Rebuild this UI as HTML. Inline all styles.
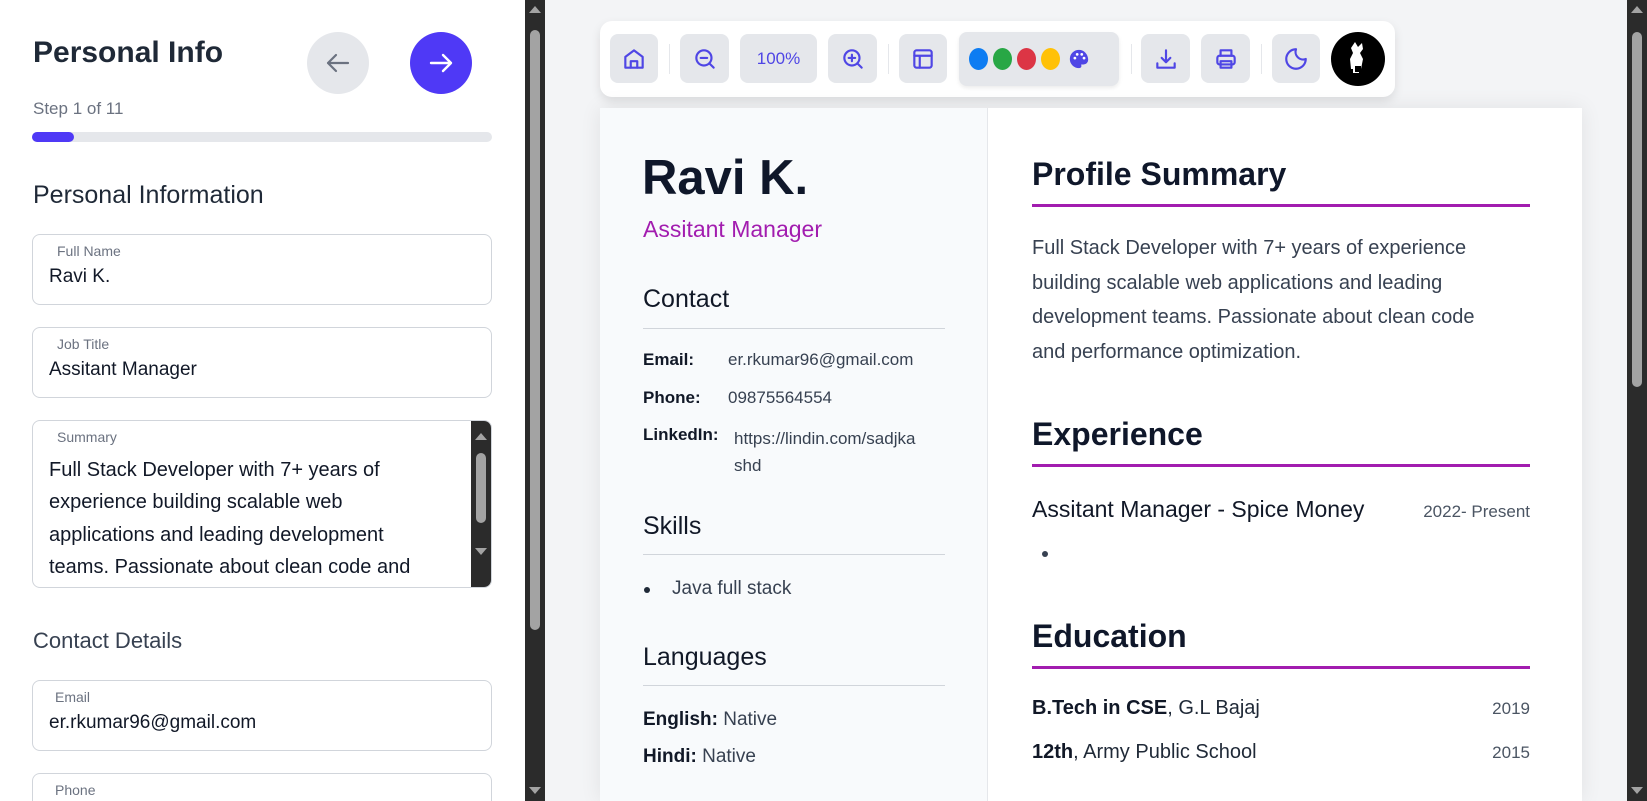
<!DOCTYPE html>
<html style="overflow:hidden;height:801px"><head><meta charset="utf-8"><style>
*{box-sizing:border-box;margin:0;padding:0}
body{width:1647px;height:801px;overflow:hidden;font-family:"Liberation Sans",sans-serif;background:#f3f4f6;position:relative;color:#111827}
.a{position:absolute}
.left{left:0;top:0;width:525px;height:801px;background:#fff;overflow:hidden}
.sb{background:#2b2b2b;width:20px;height:801px;top:0}
.thumb{position:absolute;left:5px;width:10px;background:#a3a3a3;border-radius:5px}
.tri-up{position:absolute;left:4px;width:0;height:0;border-left:6px solid transparent;border-right:6px solid transparent;border-bottom:7px solid #a3a3a3}
.tri-dn{position:absolute;left:4px;width:0;height:0;border-left:6px solid transparent;border-right:6px solid transparent;border-top:7px solid #a3a3a3}
.box{position:absolute;left:32px;width:460px;border:1px solid #d1d5db;border-radius:8px;background:#fff}
.lbl{position:absolute;left:24px;top:8px;font-size:14px;color:#6b7280}
.val{position:absolute;left:16px;top:31px;font-size:19px;color:#111827}
.tb{position:absolute;top:34px;height:49px;background:#e5e7eb;border-radius:8px;display:flex;align-items:center;justify-content:center}
.sep{position:absolute;top:44px;width:1px;height:30px;background:#e5e7eb}
.tb svg{width:26px;height:26px;fill:none;stroke:#4f46e5;stroke-width:2;stroke-linecap:round;stroke-linejoin:round}
.h2{font-size:25px;color:#111827;position:absolute;left:643px}
.hl{position:absolute;left:643px;width:302px;height:1px;background:#d1d5db}
.ct{position:absolute;font-size:17px;color:#374151;white-space:nowrap}
.ct b{color:#111827}
.rh{position:absolute;left:1032px;font-size:32px;font-weight:bold;color:#0f172a}
.pl{position:absolute;left:1032px;width:498px;height:3px;background:#a21caf}
</style></head><body>
<div class="a left">
  <div class="a" style="left:33px;top:36px;font-size:30px;font-weight:bold;color:#1f2937">Personal Info</div>
  <div class="a" style="left:307px;top:32px;width:62px;height:62px;border-radius:50%;background:#e5e7eb"><svg width="62" height="62" viewBox="0 0 62 62" fill="none" stroke="#6b7280" stroke-width="2.2" stroke-linecap="round" stroke-linejoin="round"><path d="M41 31H21M29 23l-8 8 8 8"/></svg></div>
  <div class="a" style="left:410px;top:32px;width:62px;height:62px;border-radius:50%;background:#4f39f6"><svg width="62" height="62" viewBox="0 0 62 62" fill="none" stroke="#fff" stroke-width="2.4" stroke-linecap="round" stroke-linejoin="round"><path d="M21 31h20M33 23l8 8-8 8"/></svg></div>
  <div class="a" style="left:33px;top:99px;font-size:17px;color:#6b7280">Step 1 of 11</div>
  <div class="a" style="left:32px;top:132px;width:460px;height:10px;border-radius:5px;background:#e5e7eb"><div style="width:42px;height:10px;border-radius:5px;background:#4f39f6"></div></div>
  <div class="a" style="left:33px;top:181px;font-size:25px;color:#1f2937">Personal Information</div>
  <div class="box" style="top:234px;height:71px"><div class="lbl">Full Name</div><div class="val">Ravi K.</div></div>
  <div class="box" style="top:327px;height:71px"><div class="lbl">Job Title</div><div class="val">Assitant Manager</div></div>
  <div class="box" style="top:420px;height:168px;overflow:hidden"><div class="lbl">Summary</div>
    <div class="a" style="left:16px;top:33px;white-space:nowrap;font-size:20px;line-height:32.4px;color:#111827">Full Stack Developer with 7+ years of<br>experience building scalable web<br>applications and leading development<br>teams. Passionate about clean code and<br>performance optimization.</div>
    <div class="a" style="right:0;top:0;width:20px;height:148px;background:#2b2b2b"><div class="tri-up" style="top:12px"></div><div class="thumb" style="top:32px;height:70px"></div><div class="tri-dn" style="top:127px"></div></div>
    <div class="a" style="right:0;top:148px;width:20px;height:20px;background:#2b2b2b"></div>
  </div>
  <div class="a" style="left:33px;top:628px;font-size:22px;color:#374151">Contact Details</div>
  <div class="box" style="top:680px;height:71px"><div class="lbl" style="left:22px">Email</div><div class="val">er.rkumar96@gmail.com</div></div>
  <div class="box" style="top:773px;height:28px;border-bottom:none;border-radius:8px 8px 0 0;overflow:hidden"><div class="lbl" style="left:22px">Phone</div></div>
</div>
<div class="a sb" style="left:525px"><div class="tri-up" style="top:6px"></div><div class="thumb" style="top:30px;height:600px"></div><div class="tri-dn" style="top:787px"></div></div>
<div class="a sb" style="left:1627px"><div class="tri-up" style="top:6px"></div><div class="thumb" style="top:32px;height:355px"></div><div class="tri-dn" style="top:787px"></div></div>

<div class="a" style="left:600px;top:21px;width:795px;height:76px;background:#fff;border-radius:12px;box-shadow:0 4px 10px rgba(0,0,0,.1)"></div>
<div class="tb" style="left:610px;width:48px"><svg viewBox="0 0 24 24"><path d="M4 10l8-6 8 6v10H4z"/><path d="M9 20v-6h6v6"/></svg></div>
<div class="sep" style="left:669px"></div>
<div class="tb" style="left:680px;width:49px"><svg viewBox="0 0 24 24"><circle cx="11" cy="11" r="7"/><path d="M8 11h6M16 16l4 4"/></svg></div>
<div class="tb" style="left:740px;width:77px;font-size:17px;color:#4f46e5">100%</div>
<div class="tb" style="left:828px;width:49px"><svg viewBox="0 0 24 24"><circle cx="11" cy="11" r="7"/><path d="M8 11h6M11 8v6M16 16l4 4"/></svg></div>
<div class="sep" style="left:888px"></div>
<div class="tb" style="left:899px;width:48px"><svg viewBox="0 0 24 24"><rect x="4" y="4" width="16" height="16" rx="2"/><path d="M4 9h16M9 9v11"/></svg></div>
<div class="tb" style="left:959px;width:160px;top:32px;height:54px;box-shadow:0 2px 4px rgba(0,0,0,.08);justify-content:flex-start;padding-left:10px;gap:5px">
  <span style="width:19px;height:22px;border-radius:50%;background:#0d7cf2;display:inline-block"></span>
  <span style="width:19px;height:22px;border-radius:50%;background:#28a745;display:inline-block"></span>
  <span style="width:19px;height:22px;border-radius:50%;background:#dc3545;display:inline-block"></span>
  <span style="width:19px;height:22px;border-radius:50%;background:#ffc107;display:inline-block"></span>
  <svg viewBox="0 0 24 24" style="width:22px;height:22px;margin-left:3px"><path d="M12 3a9 9 0 1 0 0 18c1.5 0 2-1 1.5-2s0-2 1.5-2h2a4 4 0 0 0 4-4c0-5.5-4-10-9-10z" fill="#4f46e5"/><circle cx="7.5" cy="11" r="1.5" fill="#fff" stroke="none"/><circle cx="10" cy="7" r="1.5" fill="#fff" stroke="none"/><circle cx="15" cy="7" r="1.5" fill="#fff" stroke="none"/><circle cx="17.5" cy="11" r="1.5" fill="#fff" stroke="none"/></svg>
</div>
<div class="sep" style="left:1131px"></div>
<div class="tb" style="left:1141px;width:49px"><svg viewBox="0 0 24 24"><path d="M12 4v11M8 11l4 4 4-4M4 16v4h16v-4"/></svg></div>
<div class="tb" style="left:1201px;width:49px"><svg viewBox="0 0 24 24"><path d="M7 9V4h10v5"/><rect x="4" y="9" width="16" height="8" rx="2"/><rect x="7" y="14" width="10" height="6"/></svg></div>
<div class="sep" style="left:1261px"></div>
<div class="tb" style="left:1272px;width:48px"><svg viewBox="0 0 24 24"><path d="M12 3a7 7 0 0 0 9 9 9 9 0 1 1-9-9z"/></svg></div>
<div class="a" style="left:1331px;top:32px;width:54px;height:54px;border-radius:50%;background:#000"><svg width="54" height="54" viewBox="0 0 54 54"><path d="M24 10l3 5 4-4 1 6-3 4 3 6-2 10h-2v4h-6v-4h-2l-1-10 3-6-2-5z" fill="#fff"/><rect x="24" y="34" width="6" height="6" fill="#000"/></svg></div>

<div class="a" style="left:600px;top:108px;width:982px;height:693px;background:#fff;box-shadow:0 0 20px rgba(0,0,0,.08)"></div>
<div class="a" style="left:600px;top:108px;width:388px;height:693px;background:#f8fafc;border-right:1px solid #e5e7eb"></div>
<div class="a" style="left:642px;top:150px;font-size:49px;font-weight:bold;color:#0f172a">Ravi K.</div>
<div class="a" style="left:643px;top:216px;font-size:23px;color:#a21caf">Assitant Manager</div>
<div class="h2" style="top:285px">Contact</div>
<div class="hl" style="top:328px"></div>
<div class="ct" style="left:643px;top:350px"><b>Email:</b></div><div class="ct" style="left:728px;top:350px">er.rkumar96@gmail.com</div>
<div class="ct" style="left:643px;top:388px"><b>Phone:</b></div><div class="ct" style="left:728px;top:388px">09875564554</div>
<div class="ct" style="left:643px;top:425px"><b>LinkedIn:</b></div><div class="ct" style="left:734px;top:425px;line-height:27px;width:210px">https://lindin.com/sadjka<br>shd</div>
<div class="h2" style="top:512px">Skills</div>
<div class="hl" style="top:554px"></div>
<div class="a" style="left:644px;top:587px;width:6px;height:6px;border-radius:50%;background:#1f2937"></div>
<div class="ct" style="left:672px;top:578px;font-size:19px">Java full stack</div>
<div class="h2" style="top:643px">Languages</div>
<div class="hl" style="top:685px"></div>
<div class="ct" style="left:643px;top:709px;font-size:19px"><b>English:</b> Native</div>
<div class="ct" style="left:643px;top:746px;font-size:19px"><b>Hindi:</b> Native</div>

<div class="rh" style="top:156px">Profile Summary</div>
<div class="pl" style="top:204px"></div>
<div class="a" style="left:1032px;top:231px;white-space:nowrap;font-size:20px;line-height:34.6px;color:#374151">Full Stack Developer with 7+ years of experience<br>building scalable web applications and leading<br>development teams. Passionate about clean code<br>and performance optimization.</div>
<div class="rh" style="top:416px">Experience</div>
<div class="pl" style="top:464px"></div>
<div class="a" style="left:1032px;top:496px;font-size:23px;color:#111827;white-space:nowrap">Assitant Manager - Spice Money</div>
<div class="a" style="left:1380px;width:150px;text-align:right;top:502px;font-size:17px;color:#4b5563">2022- Present</div>
<div class="a" style="left:1042px;top:551px;width:6px;height:6px;border-radius:50%;background:#374151"></div>
<div class="rh" style="top:618px">Education</div>
<div class="pl" style="top:666px"></div>
<div class="a" style="left:1032px;top:697px;font-size:20px;color:#1f2937"><b style="color:#111827">B.Tech in CSE</b>, G.L Bajaj</div>
<div class="a" style="left:1430px;width:100px;text-align:right;top:699px;font-size:17px;color:#4b5563">2019</div>
<div class="a" style="left:1032px;top:741px;font-size:20px;color:#1f2937"><b style="color:#111827">12th</b>, Army Public School</div>
<div class="a" style="left:1430px;width:100px;text-align:right;top:743px;font-size:17px;color:#4b5563">2015</div>
</body></html>
